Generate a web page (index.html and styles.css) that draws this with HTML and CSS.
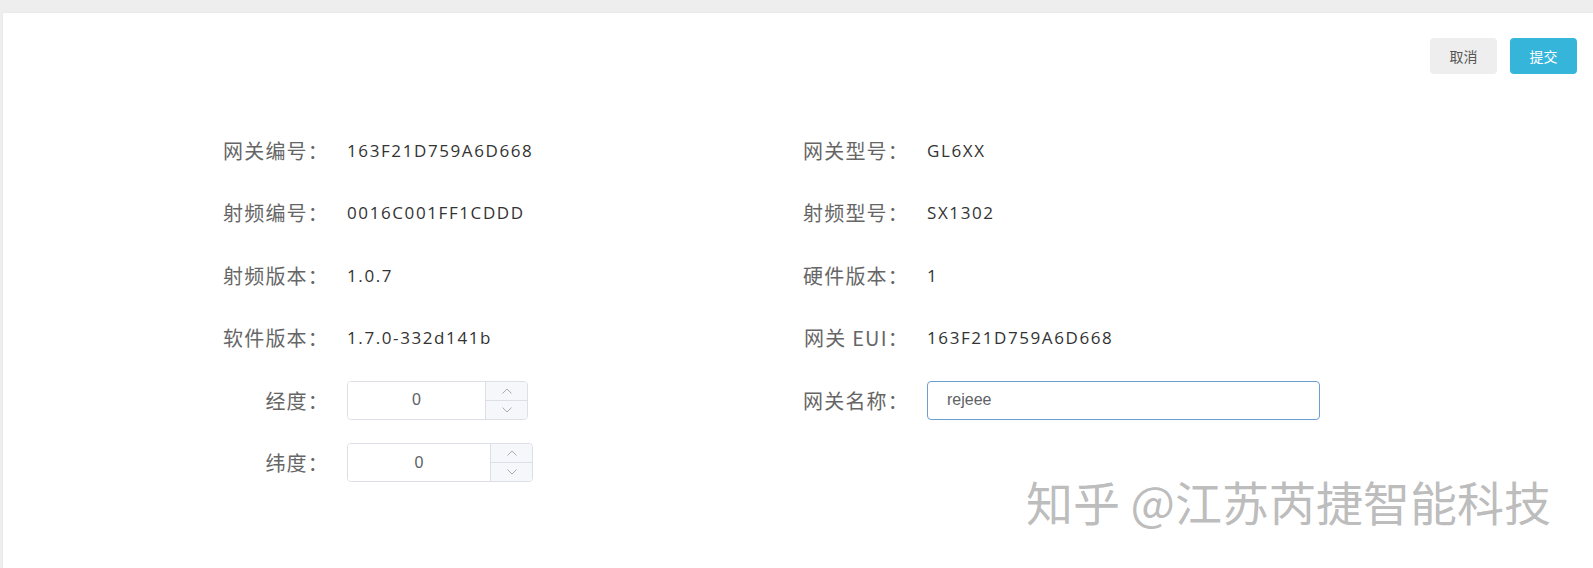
FILE: index.html
```html
<!DOCTYPE html>
<html lang="zh">
<head>
  <meta charset="UTF-8">
  <title>网关详情</title>
  <link rel="stylesheet" href="styles.css">
</head>
<body>

<div class="page">
  <!-- 顶部按钮 -->
  <div class="toolbar">
    <button class="btn btn-cancel">取消</button>
    <button class="btn btn-submit">提交</button>
  </div>

  <!-- 网关信息表单 -->
  <div class="form">
    <div class="row">
      <span class="label">网关编号：</span>
      <span class="value">163F21D759A6D668</span>
    </div>
    <div class="row">
      <span class="label">网关型号：</span>
      <span class="value">GL6XX</span>
    </div>

    <div class="row">
      <span class="label">射频编号：</span>
      <span class="value">0016C001FF1CDDD</span>
    </div>
    <div class="row">
      <span class="label">射频型号：</span>
      <span class="value">SX1302</span>
    </div>

    <div class="row">
      <span class="label">射频版本：</span>
      <span class="value">1.0.7</span>
    </div>
    <div class="row">
      <span class="label">硬件版本：</span>
      <span class="value">1</span>
    </div>

    <div class="row">
      <span class="label">软件版本：</span>
      <span class="value">1.7.0-332d141b</span>
    </div>
    <div class="row">
      <span class="label">网关 EUI：</span>
      <span class="value">163F21D759A6D668</span>
    </div>

    <div class="row">
      <span class="label">经度：</span>
      <div class="num-input">
        <input type="text" value="0">
        <div class="num-ctrl">
          <span class="step"><svg width="12" height="8" viewBox="0 0 12 8"><path d="M1.5 6.5 6 2l4.5 4.5" fill="none" stroke="#a8abb2" stroke-width="1"/></svg></span>
          <span class="step"><svg width="12" height="8" viewBox="0 0 12 8"><path d="M1.5 1.5 6 6l4.5-4.5" fill="none" stroke="#a8abb2" stroke-width="1"/></svg></span>
        </div>
      </div>
    </div>
    <div class="row">
      <span class="label">网关名称：</span>
      <input class="text-input" type="text" value="rejeee">
    </div>

    <div class="row">
      <span class="label">纬度：</span>
      <div class="num-input wide">
        <input type="text" value="0">
        <div class="num-ctrl">
          <span class="step"><svg width="12" height="8" viewBox="0 0 12 8"><path d="M1.5 6.5 6 2l4.5 4.5" fill="none" stroke="#a8abb2" stroke-width="1"/></svg></span>
          <span class="step"><svg width="12" height="8" viewBox="0 0 12 8"><path d="M1.5 1.5 6 6l4.5-4.5" fill="none" stroke="#a8abb2" stroke-width="1"/></svg></span>
        </div>
      </div>
    </div>
    <div class="row"></div>
  </div>

  <div class="watermark">知乎 @江苏芮捷智能科技</div>
</div>

</body>
</html>
```

FILE: styles.css
```css
body {
  margin: 0;
  background-color: #eeeeee;
  font-family: "Noto Sans CJK SC", sans-serif;
}
.page {
  position: relative;
  margin: 13px 0 0 3px;
  height: 555px;
  background: #fff;
  box-shadow: 0 0 2px rgba(0, 0, 0, 0.06);
}
.toolbar {
  display: flex;
  justify-content: flex-end;
  gap: 13px;
  padding: 25px 16px 0 0;
}
.btn {
  width: 67px;
  height: 36px;
  border: none;
  border-radius: 4px;
  font-family: "Noto Sans CJK SC", sans-serif;
  font-size: 14px;
}
.btn-cancel {
  background-color: #eeeeee;
  color: #555;
}
.btn-submit {
  background-color: #36b5db;
  color: #fff;
}
.form {
  display: grid;
  grid-template-columns: 580px 580px;
  grid-auto-rows: 40px;
  row-gap: 22.6px;
  margin-top: 56px;
  padding-left: 197px;
}
.row {
  display: flex;
  align-items: center;
}
.label {
  width: 147px;
  padding-right: 18px;
  box-sizing: border-box;
  text-align: right;
  font-size: 20px;
  letter-spacing: 1.2px;
  color: #666;
  white-space: nowrap;
}
.value {
  font-family: "Open Sans", sans-serif;
  font-size: 17px;
  letter-spacing: 1.6px;
  color: #333;
}
.num-input {
  display: flex;
  width: 181px;
  height: 39px;
  box-sizing: border-box;
  border: 1px solid #dcdfe6;
  border-radius: 4px;
  overflow: hidden;
}
.num-input.wide {
  width: 186px;
}
.num-input input {
  flex: 1;
  min-width: 0;
  border: none;
  outline: none;
  text-align: center;
  font-family: "Liberation Sans", sans-serif;
  font-size: 16px;
  color: #606266;
}
.num-ctrl {
  width: 41px;
  display: flex;
  flex-direction: column;
  border-left: 1px solid #dcdfe6;
  background-color: #f5f7fa;
}
.step {
  flex: 1;
  display: flex;
  align-items: center;
  justify-content: center;
}
.step + .step {
  border-top: 1px solid #dcdfe6;
}
.text-input {
  width: 393px;
  height: 39px;
  box-sizing: border-box;
  padding: 0 19px;
  border: 1px solid #6a9fd2;
  border-radius: 4px;
  outline: none;
  font-family: "Liberation Sans", sans-serif;
  font-size: 16px;
  color: #606266;
}
.watermark {
  position: absolute;
  left: 1023px;
  top: 453px;
  font-size: 47px;
  letter-spacing: 0;
  color: rgba(150, 150, 150, 0.65);
  text-shadow: 1px 1px 0 rgba(255, 255, 255, 0.8);
  white-space: nowrap;
}
```
